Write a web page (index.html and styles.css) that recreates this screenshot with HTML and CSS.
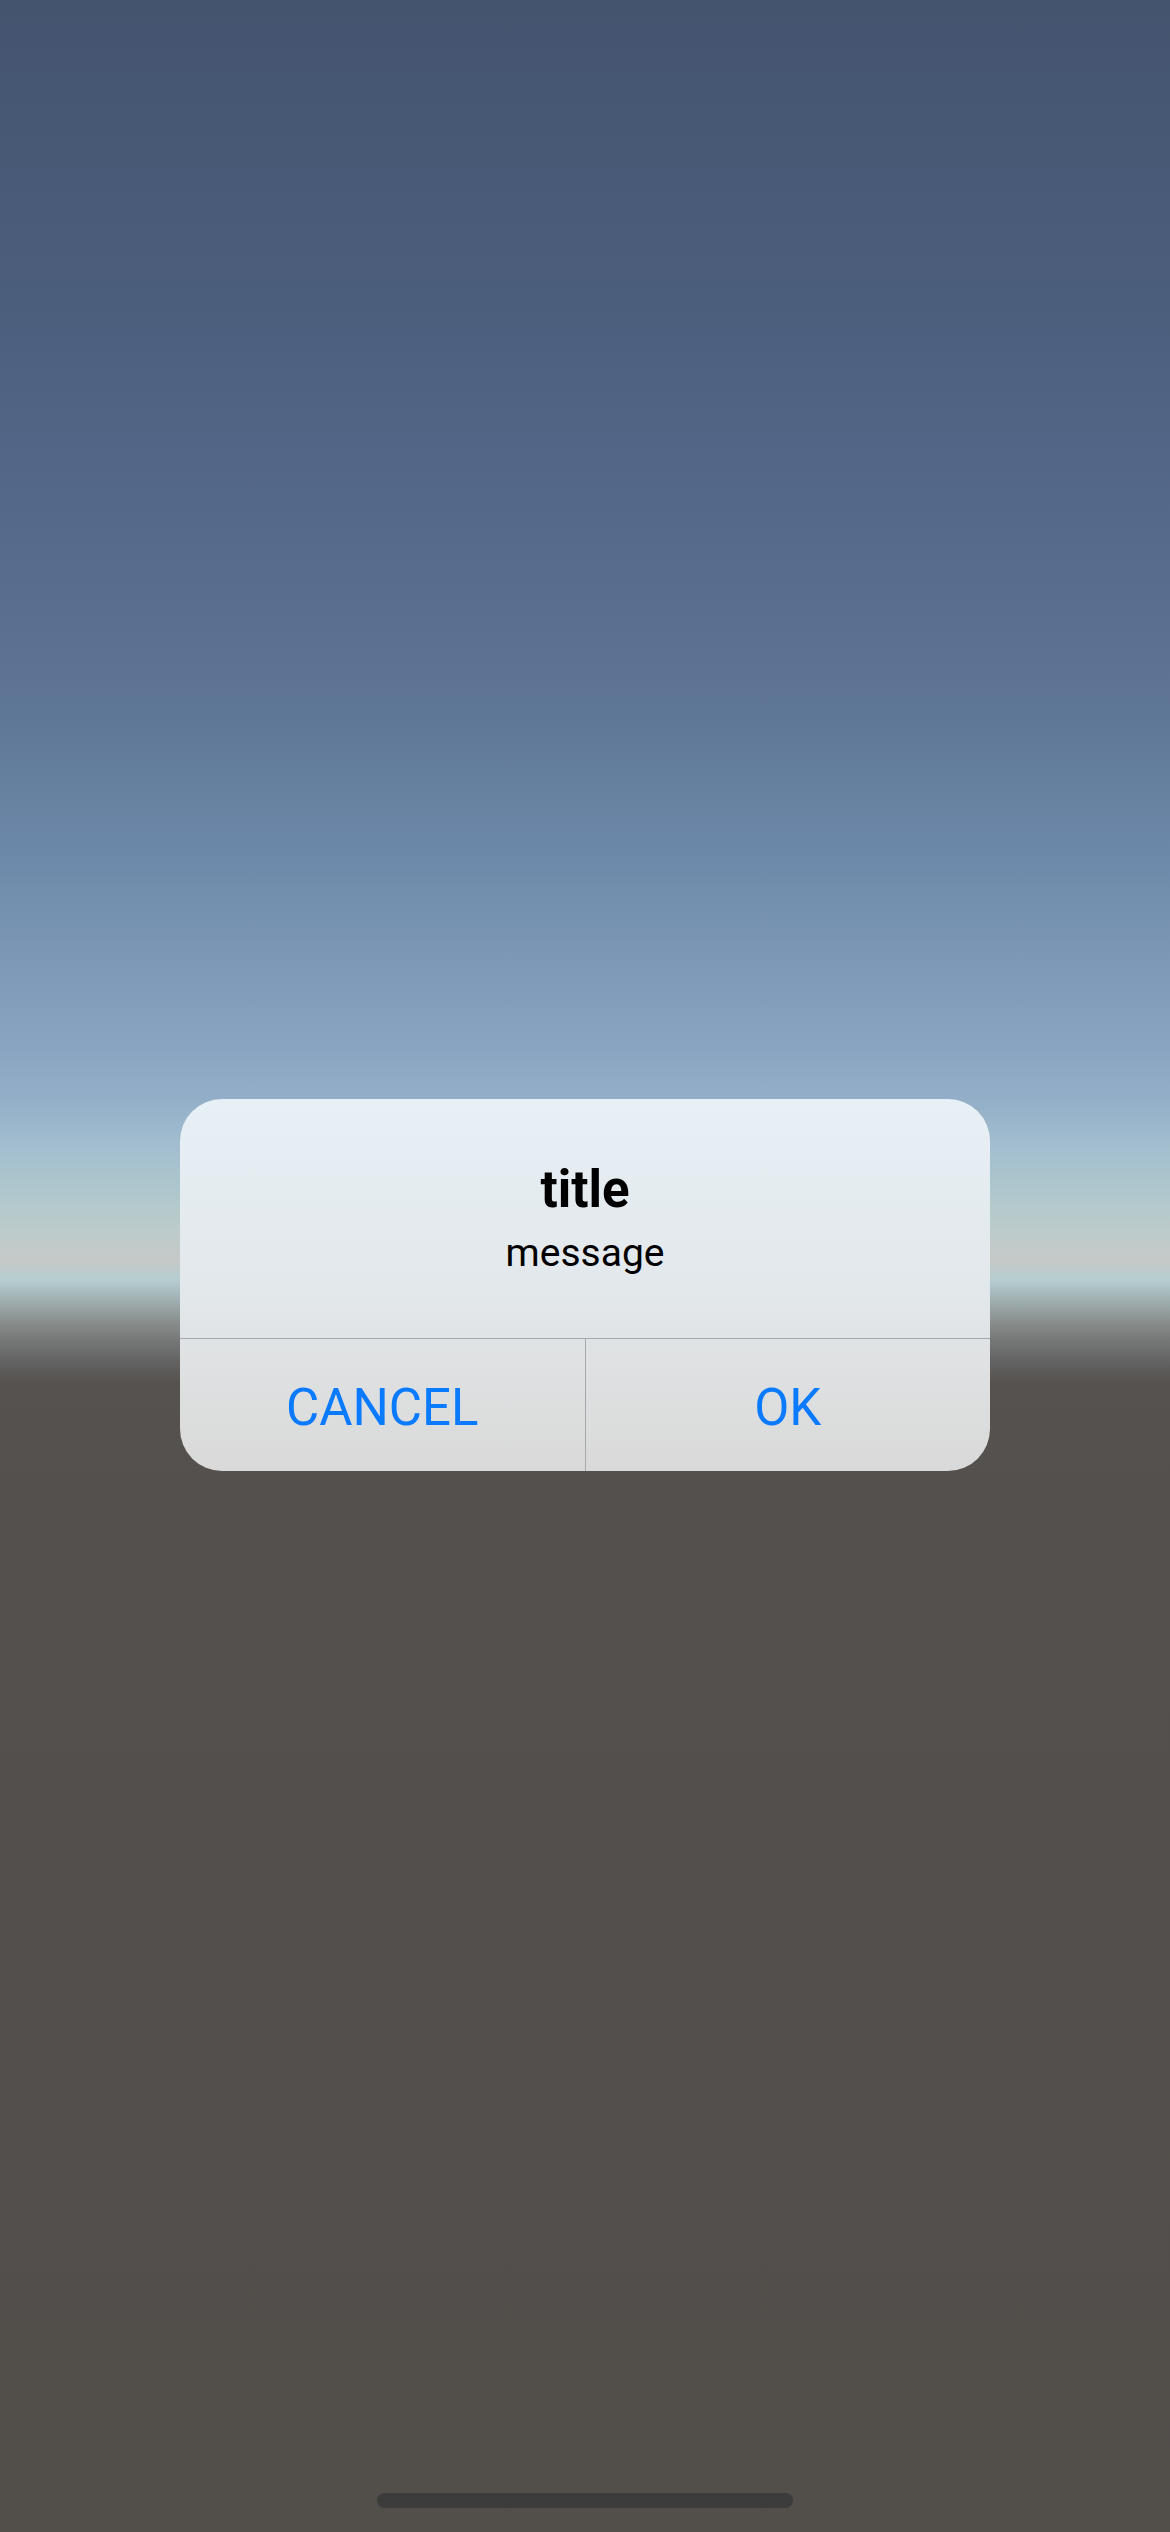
FILE: index.html
```html
<!DOCTYPE html>
<html>

<head>
    <title>Alert</title>
    <link rel="stylesheet" href="styles.css">
</head>

<body>
    <div class="screen">
        <div class="alert">
            <div class="alert-body">
                <div class="alert-title">title</div>
                <div class="alert-message">message</div>
            </div>
            <div class="alert-actions">
                <button class="alert-btn">CANCEL</button>
                <button class="alert-btn">OK</button>
            </div>
        </div>
        <div class="home-bar"></div>
    </div>
</body>

</html>
```

FILE: styles.css
```css
body {
    margin: 0;
    font-family: Roboto, "Noto Sans", sans-serif;
}

.screen {
    position: relative;
    width: 1170px;
    height: 2532px;
    display: flex;
    flex-direction: column;
    align-items: center;
    padding-top: 1099px;
    box-sizing: border-box;
    background: linear-gradient(to bottom,
            #44546f 0px,
            #4b5e7c 300px,
            #54688a 500px,
            #5e7595 700px,
            #6c88a8 850px,
            #7d98b7 960px,
            #8aa5c1 1050px,
            #93afc8 1100px,
            #a3bfcf 1150px,
            #b1c9cc 1200px,
            #bccbcb 1230px,
            #c6c9c8 1262px,
            #b5cdd0 1280px,
            #a0b0b2 1300px,
            #8b9190 1320px,
            #767877 1340px,
            #646464 1360px,
            #565250 1382px,
            #54504d 1500px,
            #524e4a 2532px);
}

.alert {
    width: 810px;
    border-radius: 42px;
    overflow: hidden;
    background: linear-gradient(to bottom, #e7f0f6 0%, #e2e7ea 55%, #dfe1e2 70%, #d9d9d9 100%);
}

.alert-body {
    height: 240px;
    box-sizing: border-box;
    padding-top: 60px;
    text-align: center;
    border-bottom: 1px solid #a6a9ac;
}

.alert-title {
    font-size: 51px;
    font-weight: 700;
    line-height: 61px;
    color: #000;
    margin-bottom: 10px;
}

.alert-message {
    font-size: 39px;
    line-height: 47px;
    color: #000;
}

.alert-actions {
    display: flex;
    height: 132px;
}

.alert-btn {
    flex: 1;
    border: none;
    background: none;
    margin: 0;
    padding: 5px 0 0;
    font-family: Roboto, "Noto Sans", sans-serif;
    font-size: 51px;
    line-height: 127px;
    color: #0a7aff;
}

.alert-btn + .alert-btn {
    border-left: 1px solid #a6a9ac;
}

.home-bar {
    position: absolute;
    left: 377px;
    top: 2493px;
    width: 416px;
    height: 15px;
    border-radius: 8px;
    background: #3c3c3c;
}
```
